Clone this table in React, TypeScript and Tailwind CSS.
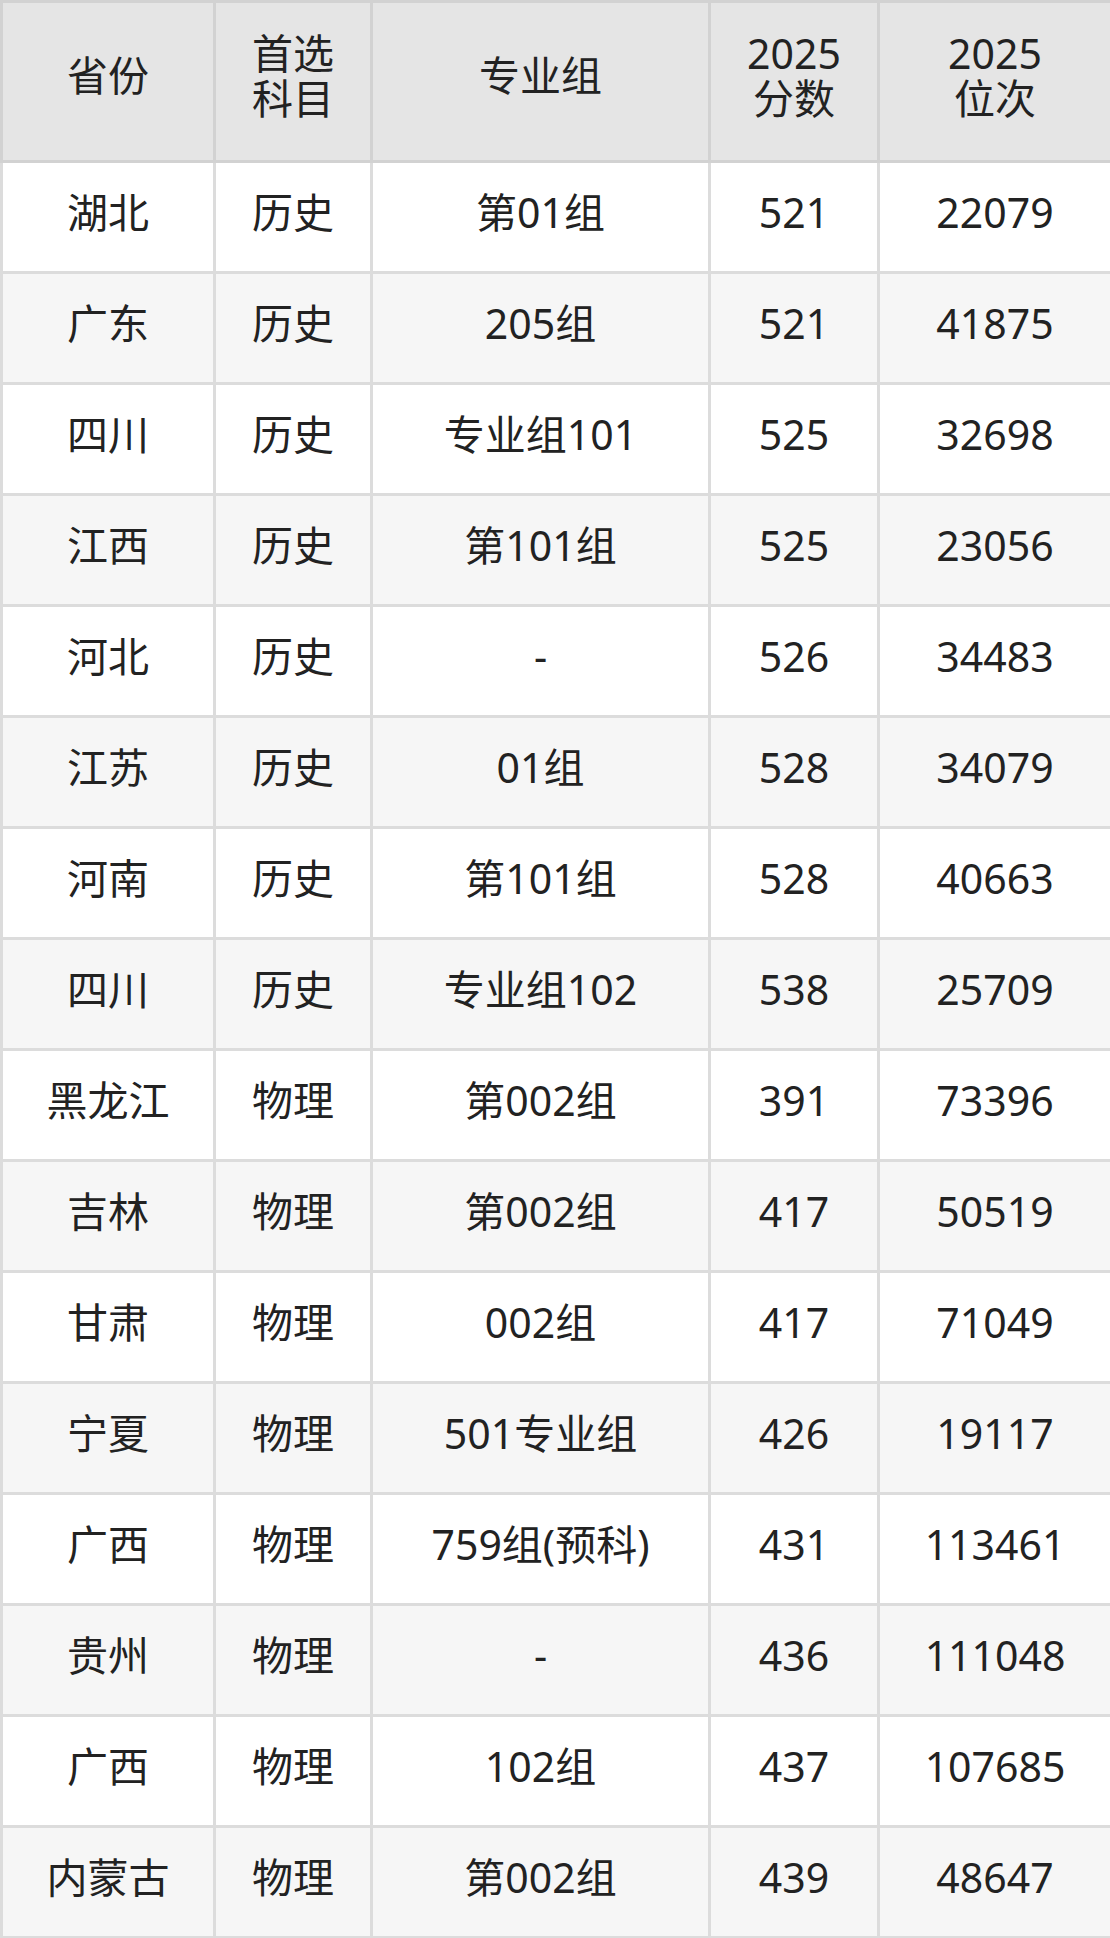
const rows = [
  ["湖北", "历史", "第01组", "521", "22079"],
  ["广东", "历史", "205组", "521", "41875"],
  ["四川", "历史", "专业组101", "525", "32698"],
  ["江西", "历史", "第101组", "525", "23056"],
  ["河北", "历史", "-", "526", "34483"],
  ["江苏", "历史", "01组", "528", "34079"],
  ["河南", "历史", "第101组", "528", "40663"],
  ["四川", "历史", "专业组102", "538", "25709"],
  ["黑龙江", "物理", "第002组", "391", "73396"],
  ["吉林", "物理", "第002组", "417", "50519"],
  ["甘肃", "物理", "002组", "417", "71049"],
  ["宁夏", "物理", "501专业组", "426", "19117"],
  ["广西", "物理", "759组(预科)", "431", "113461"],
  ["贵州", "物理", "-", "436", "111048"],
  ["广西", "物理", "102组", "437", "107685"],
  ["内蒙古", "物理", "第002组", "439", "48647"],
];

const headers = ["省份", "首选\n科目", "专业组", "2025\n分数", "2025\n位次"];

const App = () => {
  return (
    <div
      className="w-[1110px] bg-white"
      style={{ fontFamily: '"Noto Sans", "Noto Sans CJK SC", sans-serif' }}
    >
      <table className="w-[1110px] table-fixed border-collapse text-center text-[41px] text-[#222]">
        <colgroup>
          <col className="w-[213px]" />
          <col className="w-[157px]" />
          <col className="w-[338px]" />
          <col className="w-[169px]" />
          <col className="w-[233px]" />
        </colgroup>
        <thead>
          <tr className="h-[160px] bg-[#e5e5e5]">
            {headers.map((h, i) => (
              <th
                key={i}
                className="border-[3px] border-[#d2d2d2] pb-[12px] font-normal leading-[45px] whitespace-pre-line"
              >
                {h}
              </th>
            ))}
          </tr>
        </thead>
        <tbody>
          {rows.map((r, i) => (
            <tr key={i} className={i % 2 === 0 ? "h-[111px] bg-white" : "h-[111px] bg-[#f6f6f6]"}>
              {r.map((c, j) => (
                <td key={j} className="border-[3px] border-[#dcdcdc] pb-[11px] leading-[44px]">
                  {c}
                </td>
              ))}
            </tr>
          ))}
        </tbody>
      </table>
    </div>
  );
};

export default App;
